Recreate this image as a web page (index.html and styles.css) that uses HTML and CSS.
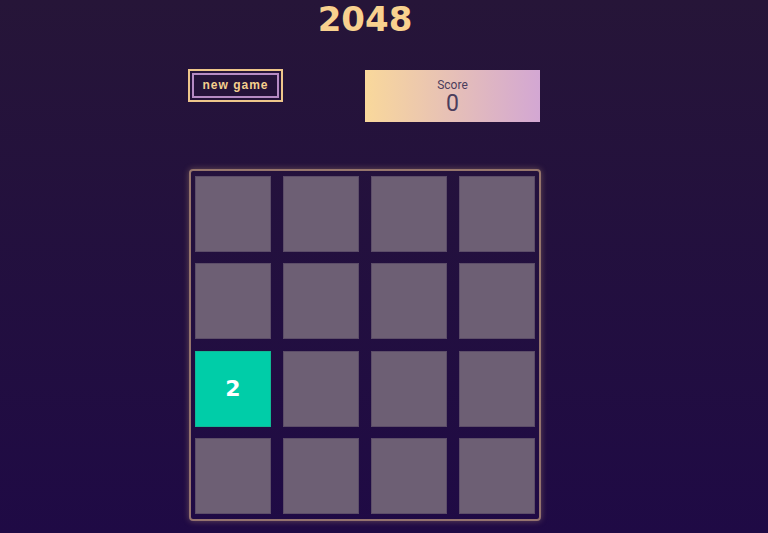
FILE: index.html
```html
<!DOCTYPE html>
<html lang="en">
<head>
<meta charset="utf-8">
<title>2048</title>
<link rel="stylesheet" href="styles.css">
</head>
<body>
<main class="game">
  <h1 class="title">2048</h1>
  <div class="header">
    <button class="new-game"><span class="new-game-inner">new game</span></button>
    <div class="score">
      <div class="score-label">Score</div>
      <div class="score-value">0</div>
    </div>
  </div>
  <div class="board">
    <div class="cell"></div><div class="cell"></div><div class="cell"></div><div class="cell"></div>
    <div class="cell"></div><div class="cell"></div><div class="cell"></div><div class="cell"></div>
    <div class="cell tile-2">2</div><div class="cell"></div><div class="cell"></div><div class="cell"></div>
    <div class="cell"></div><div class="cell"></div><div class="cell"></div><div class="cell"></div>
  </div>
</main>
</body>
</html>
```

FILE: styles.css
```css
html, body {
  margin: 0;
  height: 100%;
}
body {
  background: linear-gradient(to bottom, #261538 0%, #1f0a45 100%);
  padding-right: 38px;
  box-sizing: border-box;
  overflow: hidden;
  font-family: "Liberation Sans", Arial, sans-serif;
}
.game {
  width: 352px;
  margin: 0 auto;
  padding-top: 1px;
}
.title {
  margin: 0;
  text-align: center;
  font-family: "DejaVu Sans", sans-serif;
  font-weight: bold;
  font-size: 34px;
  line-height: 37px;
  color: #f8d18f;
}
.header {
  margin-top: 31px;
  display: flex;
  justify-content: space-between;
  align-items: flex-start;
}
.new-game {
  margin: 0 0 0 -1px;
  padding: 2px;
  border: 2px solid #eec68b;
  background: transparent;
  cursor: pointer;
}
.new-game-inner {
  display: block;
  box-sizing: border-box;
  width: 87px;
  height: 25px;
  border: 2px solid #b68bc4;
  line-height: 21px;
  text-align: center;
  font-family: "Liberation Sans", Arial, sans-serif;
  font-weight: bold;
  font-size: 12px;
  letter-spacing: 1px;
  color: #f5cf8e;
}
.score {
  margin-top: 1px;
  margin-right: 1px;
  width: 175px;
  height: 52px;
  background: linear-gradient(to right, #f9d89b, #d3a7d3);
  text-align: center;
  font-family: Roboto, "Liberation Sans", sans-serif;
  color: #4b3d5c;
  box-sizing: border-box;
  padding-top: 8px;
}
.score-label {
  font-size: 12px;
  line-height: 14px;
}
.score-value {
  font-size: 23px;
  line-height: 24px;
}
.board {
  margin-top: 47px;
  box-sizing: border-box;
  width: 352px;
  height: 352px;
  border: 2px solid rgba(226, 185, 140, 0.6);
  border-radius: 4px;
  box-shadow: 0 0 6px rgba(230, 185, 130, 0.35);
  padding: 5px 4px;
  display: grid;
  grid-template-columns: repeat(4, 76px);
  grid-template-rows: repeat(4, 76px);
  column-gap: 12px;
  row-gap: 11.33px;
}
.cell {
  box-sizing: border-box;
  background: #6d5f74;
  border: 1px solid #5c4d68;
}
.tile-2 {
  background: #00cda8;
  border-color: #10b894;
  display: flex;
  align-items: center;
  justify-content: center;
  color: #ffffff;
  font-family: "DejaVu Sans", sans-serif;
  font-weight: bold;
  font-size: 22px;
}
```
